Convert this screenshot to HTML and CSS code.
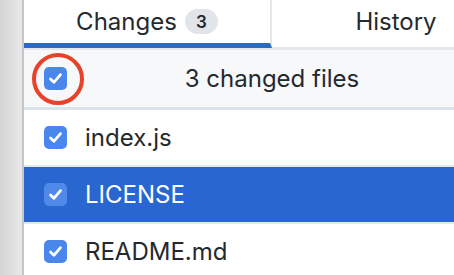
FILE: index.html
```html
<!DOCTYPE html>
<html lang="en">
<head>
<meta charset="utf-8">
<title>Changes</title>
<link rel="stylesheet" href="styles.css">
</head>
<body>
<div class="app">
  <div class="gutter"></div>
  <div class="panel">
    <div class="tabs">
      <div class="tab active"><span class="tab-label">Changes</span><span class="badge">3</span></div>
      <div class="tab"><span class="tab-label">History</span></div>
    </div>
    <div class="header">
      <span class="cb-wrap">
        <span class="checkbox"><svg viewBox="0 0 24 24" width="23" height="23"><path d="M6.8 12.6 L10.3 16 L17.2 8" fill="none" stroke="#fff" stroke-width="2.9" stroke-linecap="round" stroke-linejoin="round"/></svg></span>
        <span class="ring"></span>
      </span>
      <span class="title">3 changed files</span>
    </div>
    <ul class="files">
      <li class="file">
        <span class="checkbox"><svg viewBox="0 0 24 24" width="23" height="23"><path d="M6.8 12.6 L10.3 16 L17.2 8" fill="none" stroke="#fff" stroke-width="2.9" stroke-linecap="round" stroke-linejoin="round"/></svg></span>
        <span class="name">index.js</span>
      </li>
      <li class="file selected">
        <span class="checkbox"><svg viewBox="0 0 24 24" width="23" height="23"><path d="M6.8 12.6 L10.3 16 L17.2 8" fill="none" stroke="#fff" stroke-width="2.9" stroke-linecap="round" stroke-linejoin="round"/></svg></span>
        <span class="name">LICENSE</span>
      </li>
      <li class="file">
        <span class="checkbox"><svg viewBox="0 0 24 24" width="23" height="23"><path d="M6.8 12.6 L10.3 16 L17.2 8" fill="none" stroke="#fff" stroke-width="2.9" stroke-linecap="round" stroke-linejoin="round"/></svg></span>
        <span class="name">README.md</span>
      </li>
    </ul>
  </div>
</div>
</body>
</html>
```
FILE: styles.css
```css
* { box-sizing: border-box; }
html, body {
  margin: 0;
  padding: 0;
  width: 454px;
  height: 275px;
  overflow: hidden;
  background: #fff;
}
body {
  font-family: "Inter", "Liberation Sans", sans-serif;
  color: #24292e;
}
.app {
  display: flex;
  height: 275px;
  overflow: hidden;
}
.gutter {
  flex: 0 0 24px;
  background: linear-gradient(to right, #d4d4d4, #e6e6e6 85%);
  border-right: 2px solid #c6c6c6;
}
.panel {
  flex: 0 0 494px;
}
.tabs {
  display: flex;
  height: 50px;
  border-bottom: 2px solid #e4e7eb;
}
.tab {
  flex: 0 0 248px;
  display: flex;
  align-items: center;
  justify-content: center;
  gap: 8px;
  font-size: 24px;
  height: 48px;
  padding-bottom: 5px;
  border-bottom: 1px solid #e4e7eb;
}
.tab.active {
  border-right: 2px solid #e4e7eb;
  border-bottom: 5px solid #2a67d1;
  padding-bottom: 0;
}
.badge {
  display: inline-flex;
  align-items: center;
  justify-content: center;
  height: 25px;
  min-width: 33px;
  padding: 0 10px;
  border-radius: 13px;
  background: #e1e4e8;
  font-size: 17px;
  font-weight: 600;
}
.header {
  display: grid;
  grid-template-columns: 1fr;
  align-items: center;
  height: 60px;
  padding-left: 20px;
  background: #f6f8fa;
  border-bottom: 3px solid #dde3eb;
}
.header > * {
  grid-row: 1;
  grid-column: 1;
}
.cb-wrap {
  position: relative;
  justify-self: start;
  display: flex;
}
.title {
  justify-self: center;
  margin-left: -20px;
  font-size: 24px;
}
.checkbox {
  display: flex;
  flex: 0 0 23px;
  width: 23px;
  height: 23px;
  border-radius: 5px;
  background: #4a87ec;
}
.ring {
  position: absolute;
  left: -12px;
  top: -14px;
  width: 52px;
  height: 52px;
  border: 4px solid #e8432a;
  border-radius: 50%;
}
.files {
  list-style: none;
  margin: 0;
  padding: 0;
}
.file {
  display: flex;
  align-items: center;
  gap: 18px;
  height: 57px;
  padding-left: 20px;
  border-bottom: 2px solid #e4e7eb;
  font-size: 24px;
}
.file.selected {
  background: #2966d0;
  color: #fff;
}
.file.selected .checkbox {
  background: #5089ea;
}
```
